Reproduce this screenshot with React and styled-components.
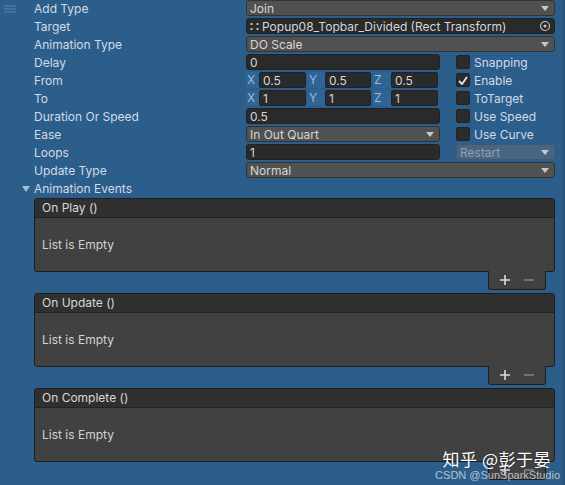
import React from "react";
import styled, { createGlobalStyle } from "styled-components";

const Global = createGlobalStyle`
  html, body { margin: 0; padding: 0; background: #2c5e8b; }
  body { font-family: Inter, "Noto Sans", "Liberation Sans", sans-serif; font-size: 12px; }
`;

const Page = styled.div`
  position: relative;
  width: 565px;
  height: 485px;
  overflow: hidden;
  background: #2c5e8b;
  color: #d2dae2;
  border-right: 2px solid #24507a;
  box-sizing: border-box;
`;

const Row = styled.div`
  display: grid;
  grid-template-columns: 34px 212px 309px;
  height: 18px;
  align-items: start;
`;

const Gutter = styled.div`
  height: 18px;
  display: flex;
  align-items: center;
  justify-content: ${(p) => (p.$end ? "flex-end" : "flex-start")};
  padding: 0 ${(p) => (p.$end ? "4px" : "0")} 0 ${(p) => (p.$end ? "0" : "4px")};
  box-sizing: border-box;
`;

const Label = styled.div`
  height: 18px;
  line-height: 17px;
  color: #d3dbe3;
  white-space: nowrap;
`;

const Split = styled.div`
  display: grid;
  grid-template-columns: 194px 99px;
  column-gap: 16px;
  align-items: start;
`;

const fieldBase = `
  height: 16px;
  box-sizing: border-box;
  border-radius: 3px;
  display: flex;
  align-items: center;
  padding: 0 3px;
  white-space: nowrap;
  overflow: hidden;
`;

const Dropdown = styled.div`
  ${fieldBase}
  justify-content: space-between;
  background: ${(p) => (p.$disabled ? "#4a6581" : "#515151")};
  border: 1px solid ${(p) => (p.$disabled ? "#3f5a75" : "#333")};
  color: ${(p) => (p.$disabled ? "#8ea2b6" : "#d6d6d6")};
  svg { flex: none; margin-right: 2px; }
`;

const TextField = styled.div`
  ${fieldBase}
  background: #2a2a2a;
  border: 1px solid #222;
  color: #d6d6d6;
`;

const ObjectField = styled(TextField)`
  padding-left: 2px;
  gap: 3px;
  justify-content: flex-start;
  span { flex: 1; }
`;

const Vector = styled.div`
  display: grid;
  grid-template-columns: 13px 49px 17px 48px 18px 49px;
  height: 16px;
`;

const Axis = styled.div`
  height: 16px;
  line-height: 16px;
  color: #9fbad4;
  background: #2f6497;
  padding-left: 1px;
`;

const AxisField = styled(TextField)`
  border-radius: 2px;
  margin-right: 2px;
`;

const Check = styled.label`
  display: flex;
  align-items: center;
  gap: 4px;
  height: 16px;
  color: #d3dbe3;
  white-space: nowrap;
`;

const Box = styled.span`
  width: 14px;
  height: 14px;
  box-sizing: border-box;
  border-radius: 2px;
  background: #2b2b2b;
  border: 1px solid #232323;
  display: flex;
  align-items: center;
  justify-content: center;
`;

const Events = styled.div`
  display: flex;
  flex-direction: column;
  gap: 3px;
  padding-left: 34px;
  width: 555px;
  box-sizing: border-box;
`;

const EventBlock = styled.div`
  display: flex;
  flex-direction: column;
`;

const Panel = styled.div`
  border: 1px solid #1e1e1e;
  border-radius: 3px;
  overflow: hidden;
  background: #414141;
`;

const PanelHeader = styled.div`
  height: 19px;
  line-height: 18px;
  box-sizing: border-box;
  padding-left: 7px;
  background: #303030;
  border-bottom: 1px solid #232323;
  color: #d8d8d8;
`;

const PanelBody = styled.div`
  height: 53px;
  display: flex;
  align-items: center;
  padding-left: 7px;
  color: #d2d2d2;
`;

const Footer = styled.div`
  align-self: flex-end;
  margin-right: 9px;
  width: 58px;
  height: 19px;
  box-sizing: border-box;
  margin-top: -1px;
  background: #414141;
  border: 1px solid #1e1e1e;
  border-top: none;
  border-radius: 0 0 3px 3px;
  display: flex;
  align-items: center;
  justify-content: space-around;
  padding: 0 4px;
`;

const Watermark = styled.div`
  position: absolute;
  right: 12px;
  bottom: 14px;
  font-family: "Noto Sans CJK SC", "Noto Sans", sans-serif;
  font-size: 17px;
  color: #ffffff;
  letter-spacing: 0.5px;
  text-shadow: 0 0 2px rgba(0, 0, 0, 0.35);
`;

const Credit = styled.div`
  position: absolute;
  right: 3px;
  bottom: 4px;
  font-family: "Liberation Sans", Arial, sans-serif;
  font-size: 11px;
  color: #c3cdd6;
  opacity: 0.9;
`;

const Arrow = () => (
  <svg width="8" height="5" viewBox="0 0 8 5">
    <path d="M0 0 H8 L4 5 Z" fill="#c8c8c8" />
  </svg>
);

const Handle = () => (
  <svg width="12" height="8" viewBox="0 0 12 8">
    <path d="M0 1 H12 M0 4 H12 M0 7 H12" stroke="#5c83aa" strokeWidth="1" />
  </svg>
);

const Foldout = () => (
  <svg width="8" height="6" viewBox="0 0 8 6">
    <path d="M0 0 H8 L4 6 Z" fill="#a9bdd0" />
  </svg>
);

const RectIcon = () => (
  <svg width="10" height="10" viewBox="0 0 10 10">
    {[1.5, 7.5].map((x) =>
      [2, 7].map((y) => <rect key={`${x}-${y}`} x={x} y={y} width="2" height="2" fill="#bcbcbc" />)
    )}
  </svg>
);

const PickIcon = () => (
  <svg width="12" height="12" viewBox="0 0 12 12">
    <circle cx="6" cy="6" r="4.5" fill="none" stroke="#c4c4c4" strokeWidth="1.2" />
    <circle cx="6" cy="6" r="1.6" fill="#c4c4c4" />
  </svg>
);

const Tick = () => (
  <svg width="10" height="9" viewBox="0 0 10 9">
    <path d="M1 5 L4 8 L9 1" fill="none" stroke="#e8e8e8" strokeWidth="1.8" />
  </svg>
);

const Plus = () => (
  <svg width="10" height="10" viewBox="0 0 10 10">
    <path d="M5 0 V10 M0 5 H10" stroke="#dcdcdc" strokeWidth="1.6" />
  </svg>
);

const Minus = () => (
  <svg width="10" height="10" viewBox="0 0 10 10">
    <path d="M0 5 H10" stroke="#8a8a8a" strokeWidth="1.4" />
  </svg>
);

const VectorField = ({ x, y, z }) => (
  <Vector>
    <Axis>X</Axis>
    <AxisField>{x}</AxisField>
    <Axis>Y</Axis>
    <AxisField>{y}</AxisField>
    <Axis>Z</Axis>
    <AxisField>{z}</AxisField>
  </Vector>
);

const Toggle = ({ label, on }) => (
  <Check>
    <Box>{on && <Tick />}</Box>
    {label}
  </Check>
);

const Prop = ({ label, children, gutter }) => (
  <Row>
    {gutter || <Gutter />}
    <Label>{label}</Label>
    {children}
  </Row>
);

const EventList = ({ title }) => (
  <EventBlock>
    <Panel>
      <PanelHeader>{title}</PanelHeader>
      <PanelBody>List is Empty</PanelBody>
    </Panel>
    <Footer>
      <Plus />
      <Minus />
    </Footer>
  </EventBlock>
);

export default function App() {
  return (
    <>
      <Global />
      <Page>
        <Prop label="Add Type" gutter={<Gutter><Handle /></Gutter>}>
          <Dropdown>Join<Arrow /></Dropdown>
        </Prop>
        <Prop label="Target">
          <ObjectField>
            <RectIcon />
            <span>Popup08_Topbar_Divided (Rect Transform)</span>
            <PickIcon />
          </ObjectField>
        </Prop>
        <Prop label="Animation Type">
          <Dropdown>DO Scale<Arrow /></Dropdown>
        </Prop>
        <Prop label="Delay">
          <Split>
            <TextField>0</TextField>
            <Toggle label="Snapping" />
          </Split>
        </Prop>
        <Prop label="From">
          <Split>
            <VectorField x="0.5" y="0.5" z="0.5" />
            <Toggle label="Enable" on />
          </Split>
        </Prop>
        <Prop label="To">
          <Split>
            <VectorField x="1" y="1" z="1" />
            <Toggle label="ToTarget" />
          </Split>
        </Prop>
        <Prop label="Duration Or Speed">
          <Split>
            <TextField>0.5</TextField>
            <Toggle label="Use Speed" />
          </Split>
        </Prop>
        <Prop label="Ease">
          <Split>
            <Dropdown>In Out Quart<Arrow /></Dropdown>
            <Toggle label="Use Curve" />
          </Split>
        </Prop>
        <Prop label="Loops">
          <Split>
            <TextField>1</TextField>
            <Dropdown $disabled>Restart<Arrow /></Dropdown>
          </Split>
        </Prop>
        <Prop label="Update Type">
          <Dropdown>Normal<Arrow /></Dropdown>
        </Prop>
        <Prop label="Animation Events" gutter={<Gutter $end><Foldout /></Gutter>} />
        <Events>
          <EventList title="On Play ()" />
          <EventList title="On Update ()" />
          <EventList title="On Complete ()" />
        </Events>
        <Watermark>知乎 @彭于晏</Watermark>
        <Credit>CSDN @SunSparkStudio</Credit>
      </Page>
    </>
  );
}
